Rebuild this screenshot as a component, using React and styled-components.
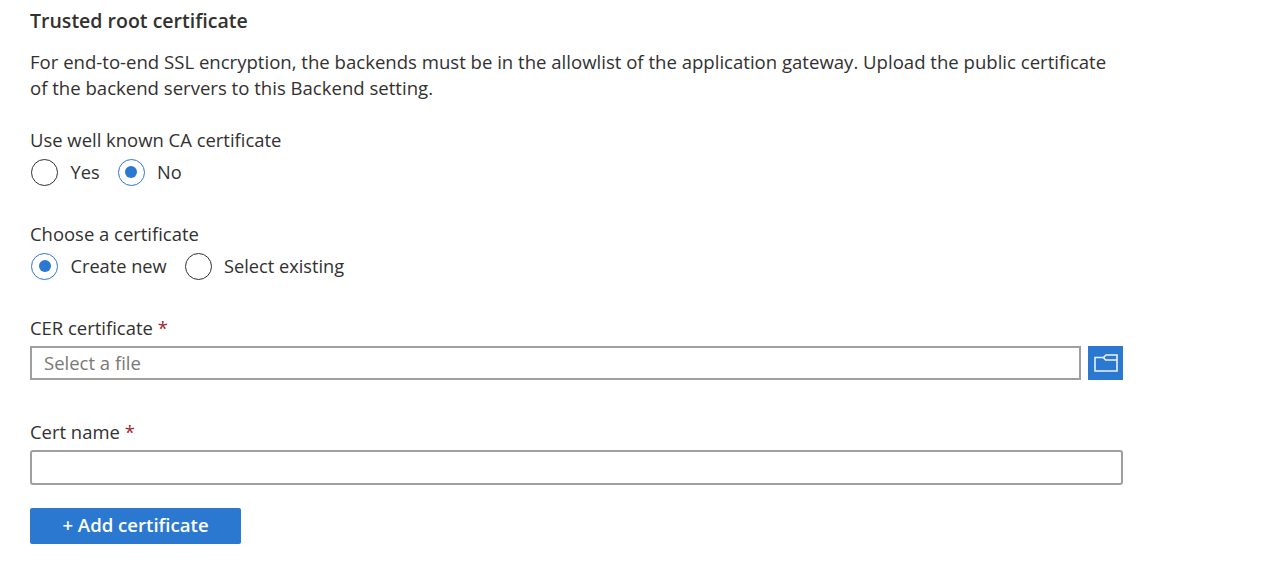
import React from "react";
import styled, { createGlobalStyle } from "styled-components";

const Global = createGlobalStyle`
  html, body { margin: 0; padding: 0; background: #fff; }
  body { font-family: "Open Sans", "Noto Sans", "Liberation Sans", sans-serif; color: #323130; }
  * { box-sizing: border-box; }
`;

const Page = styled.div`
  width: 1280px;
  height: 563px;
  padding: 8px 0 0 30px;
  overflow: hidden;
  display: flex;
  flex-direction: column;
  align-items: flex-start;
`;

const Heading = styled.h2`
  margin: 0;
  font-size: 19.55px;
  line-height: 26px;
  font-weight: 600;
`;

const Description = styled.p`
  margin: 15px 0 0;
  width: 1085px;
  font-size: 18.57px;
  line-height: 26px;
  font-weight: 400;
`;

const Field = styled.div`
  margin-top: ${(p) => p.$top}px;
  display: flex;
  flex-direction: column;
`;

const Label = styled.label`
  font-size: 18.45px;
  line-height: 26px;
  height: 26px;
`;

const Required = styled.span`
  color: #a4262c;
  margin-left: 5px;
`;

const RadioRow = styled.div`
  display: flex;
  align-items: center;
  margin-top: 6px;
  height: 26px;
  gap: 17px;
`;

const RadioOption = styled.div`
  display: flex;
  align-items: center;
  gap: 12.5px;
  font-size: 18.2px;
`;

const Circle = styled.span`
  width: 27px;
  height: 27px;
  border-radius: 50%;
  border: 1.5px solid ${(p) => (p.$on ? "#2b78d0" : "#323130")};
  display: flex;
  align-items: center;
  justify-content: center;
  margin-left: 1px;
  &::after {
    content: "";
    display: ${(p) => (p.$on ? "block" : "none")};
    width: 12px;
    height: 12px;
    border-radius: 50%;
    background: #2b78d0;
  }
`;

const InputRow = styled.div`
  display: flex;
  gap: 7px;
  margin-top: 5px;
`;

const TextBox = styled.div`
  width: ${(p) => p.$w}px;
  height: ${(p) => p.$h}px;
  border: 2px solid #a19f9d;
  border-radius: ${(p) => p.$radius || 0}px;
  padding: 0 12px;
  font-size: 18.5px;
  line-height: 30px;
  color: #7a7876;
  background: #fff;
`;

const FolderButton = styled.div`
  width: 35px;
  height: 34px;
  background: #2b78d0;
  display: flex;
  align-items: center;
  justify-content: center;
`;

const AddButton = styled.button`
  margin-top: 23px;
  width: 211px;
  height: 36px;
  border: 0;
  border-radius: 2px;
  background: #2b78d0;
  color: #fff;
  font-family: inherit;
  font-size: 18.6px;
  font-weight: 600;
  padding: 0 0 3px;
`;

const Radio = ({ on, children }) => (
  <RadioOption>
    <Circle $on={on} />
    {children}
  </RadioOption>
);

export default function App() {
  return (
    <Page>
      <Global />
      <Heading>Trusted root certificate</Heading>
      <Description>
        For end-to-end SSL encryption, the backends must be in the allowlist of the application gateway. Upload the public certificate of the backend servers to this Backend setting.
      </Description>
      <Field $top={26}>
        <Label>Use well known CA certificate</Label>
        <RadioRow>
          <Radio>Yes</Radio>
          <Radio on>No</Radio>
        </RadioRow>
      </Field>
      <Field $top={36}>
        <Label>Choose a certificate</Label>
        <RadioRow>
          <Radio on>Create new</Radio>
          <Radio>Select existing</Radio>
        </RadioRow>
      </Field>
      <Field $top={36}>
        <Label>CER certificate<Required>*</Required></Label>
        <InputRow>
          <TextBox $w={1051} $h={34}>Select a file</TextBox>
          <FolderButton>
            <svg width="24" height="18" viewBox="0 0 24 18" fill="none" stroke="#eaf2fb" strokeWidth="1.6">
              <path d="M1 3.5H9.5L12 1H23V17H1Z" />
              <path d="M9.5 3.5L11.5 6H23" />
            </svg>
          </FolderButton>
        </InputRow>
      </Field>
      <Field $top={39}>
        <Label>Cert name<Required>*</Required></Label>
        <InputRow>
          <TextBox $w={1093} $h={35} $radius={3} />
        </InputRow>
      </Field>
      <AddButton>+ Add certificate</AddButton>
    </Page>
  );
}
